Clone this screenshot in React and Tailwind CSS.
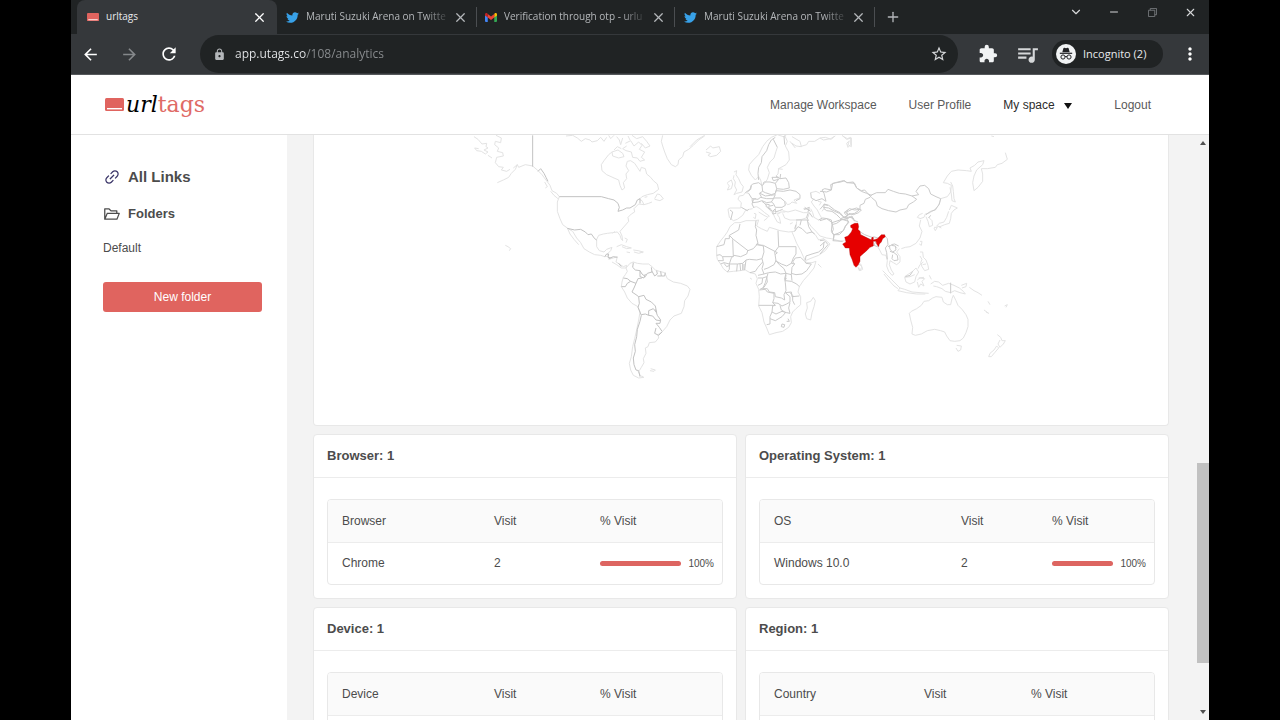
import React, { useState } from "react";
import { ChevronDown, Minus, Plus, X } from "lucide-react";
import { FaTwitter } from "react-icons/fa";
import { AiOutlineFolderOpen, AiOutlineLink } from "react-icons/ai";
import {
  MdArrowBack,
  MdArrowForward,
  MdExtension,
  MdLock,
  MdMoreVert,
  MdQueueMusic,
  MdRefresh,
  MdStarBorder,
} from "react-icons/md";

const TABS = [
  { title: "Maruti Suzuki Arena on Twitte", icon: "twitter" },
  { title: "Verification through otp - urlu", icon: "gmail" },
  { title: "Maruti Suzuki Arena on Twitte", icon: "twitter" },
];

const REPORTS = [
  { title: "Browser: 1", label: "Browser", name: "Chrome", col1: "w-[152px]", col2: "w-[106px]" },
  { title: "Operating System: 1", label: "OS", name: "Windows 10.0", col1: "w-[187px]", col2: "w-[91px]" },
  { title: "Device: 1", label: "Device", name: "Desktop", col1: "w-[152px]", col2: "w-[106px]" },
  { title: "Region: 1", label: "Country", name: "India", col1: "w-[150px]", col2: "w-[107px]" },
];

// Coastlines and country borders, grouped by part of the world
const AMERICAS_COAST = [
  "M42 20L54 28L66 42L80 40L78 50L84 54L72 60L84 66L76 72L64 64L50 62L44 54L56 56M84 76L96 84",
  "M108 16L124 24L122 38L106 34L104 44L116 54L112 64L128 68L130 78L110 82L106 98L116 110L130 112L124 120L140 124L150 118M112 158L130 150L146 142L154 130L166 118L172 104L160 114M172 104L176 112L196 104L218 108",
  "M218 108L234 122L246 134L258 150L270 166L276 182L290 190L298 200M254 156L262 170L256 174M272 184L282 196L294 206",
  "M298 200L292 216L292 244L300 266L308 284L322 294L330 312L342 328L356 344M324 296L338 304L350 324L362 338L372 356L388 366L404 374L422 376L434 380L446 378",
  "M446 378L442 372L452 362L456 352L440 358L432 366L418 362L410 350L410 328L416 316L430 312L442 310L458 308L472 306L480 316L484 328L488 332L486 318L480 304L494 288L506 274L504 262L514 252L524 246L522 236L530 228L536 222L552 224",
  "M446 388L460 384L472 380L468 396L478 402L490 410L500 406L498 414L484 414L470 404L456 396",
  "M470 350L484 344L500 350L514 354L500 356L486 350M520 360L534 362L550 366L536 370L522 366M500 366L510 368M494 324L502 328L498 338M540 366L548 368",
  "M318 18L338 16L352 24L364 34L376 26L390 30L396 36L412 32L422 22L432 34L440 22M446 16L452 26L462 16M470 20L478 30L482 44L488 24",
  "M456 66L474 60L488 70L492 80L476 84L458 78L456 66L446 74L432 92L424 104L426 122L440 134L462 144L476 150L480 166L486 180L494 174L490 158L500 146L498 132L506 122L498 108L502 94L512 92L524 100L532 112L540 124L544 112L556 116L560 132L572 142L580 152L592 162L596 178L580 190L562 194L546 200L538 208L546 212L552 224L566 220L576 216",
  "M496 40L512 32L522 48L536 36L546 46L538 58L554 66L544 82L554 90L540 94L532 84L518 82L514 66L498 62L488 56L500 48M504 18L510 30M516 16L530 26L548 20L560 34L570 48L556 54L544 40M462 60L472 50L484 56",
  "M584 206L592 192L600 194L610 206L600 212L584 208M554 202L562 200",
  "M608 16L604 34L608 48L614 66L622 86L634 104L646 110L654 104L656 90L668 80L672 66L686 58L700 46L716 30L734 18",
  "M136 346L144 350L152 356L148 362",
  "M498 414L502 424L496 434L490 442L486 456L484 470L494 486L502 504L516 520L534 530L540 546L536 570L530 600L524 626L518 650L514 680L508 700L512 720L520 736L536 744L552 742",
  "M498 414L510 400L520 396L532 400L548 402L566 402L576 410L586 420L598 424L614 428L622 446L640 456L662 460L682 468L690 478L684 498L674 512L672 530L664 550L642 558L630 570L620 590L606 606L594 614L596 624L586 636L568 638L564 650L556 654L558 670L550 686L552 698L544 712L538 722",
  "M572 716L586 720L582 724L570 722M534 724L542 738L550 740M458 310L464 304",
];

const AMERICAS_BORDERS = [
  "M218 16L218 110M298 200L424 200L446 206L462 210L474 220L478 232L474 244L488 240L500 234L510 234L526 224L532 210L540 206L540 220",
  "M234 124L242 116L252 130L258 142L264 154M322 295L344 300L362 298L376 306L384 314L394 312L404 326L410 330",
  "M434 380L440 372L446 372L444 382L452 384M446 386L460 380L472 382M476 400L484 410",
  "M520 398L518 412L526 420L540 422L546 432L556 440L562 430L576 426L574 412M576 424L584 438L592 432L590 422M592 438L604 438L602 424M604 438L614 438L616 428M540 422L540 440L552 444L556 432",
  "M490 444L502 446L512 454L528 460L534 446L546 444M484 470L496 470L502 460L512 454M528 460L522 474L516 486L528 494L536 500L552 496L558 508L574 516L586 528L590 548L580 536L566 542L566 556L578 558L588 570L600 572",
  "M536 500L538 520L534 532L544 556L540 574L532 598L530 620L524 644L526 664L520 684L522 704L528 720L536 722L540 740M544 554L556 552L566 556M586 538L592 556L602 570L600 580L588 580L598 592L606 604M588 594L584 610L596 616L606 606",
];

const AFRICA_COAST = [
  "M48 60L62 48L68 54L88 50L92 64L80 76L62 80L54 76L62 70L48 66M0 50L20 30L44 16",
  "M132 126L140 122L138 134L146 146L152 160L160 170L156 186L140 190L132 194L140 180L134 168L136 156L130 146L132 136M112 158L124 150L128 162L124 176L112 180L118 168L112 160",
  "M196 150L184 136L176 120L178 104L190 90L206 74L218 50L230 34L244 22L262 14L280 20L290 14M196 150L206 140L212 150L216 168L224 160L232 148L238 128L232 112L240 96L252 84L258 64L262 52M284 16L292 34L286 48L296 66L298 90L288 104L266 116L264 132L258 138L266 148M264 116L278 118",
  "M306 20L330 34L334 50L318 48L306 40M330 50L350 44L356 34L374 34L390 24L400 30L422 26L436 18M456 16L470 28L484 24L484 50L474 44L478 32",
  "M176 190L166 188L160 196L148 198L144 208L154 218L152 234L120 234L114 238L118 262L130 272L142 268L158 256L166 242L178 238L188 236",
  "M190 232L200 230L210 236L224 248L238 258L234 262L222 256L206 246M232 264L222 272M192 250L198 252L196 266L190 262M226 228L238 238L250 252L254 262L262 276L272 280L268 262L262 254L272 246L286 246",
  "M250 240L260 250L272 248M286 214L292 224L300 222L306 216L320 220L312 210L328 204M278 242L294 246L316 240L340 248L358 248L354 262L336 268L320 270L300 270L284 264L278 250M340 236L360 240M300 282L308 278",
  "M362 188L378 184L390 190M372 206L364 216L372 228L382 240L388 252L396 266L386 270L372 262L368 248L362 236M384 214L394 216L388 226M402 236L396 244",
  "M134 278L120 290L112 306L102 320L92 332L80 350L80 376L82 388L92 402L100 416L112 426L130 424L150 422L166 420L180 428L196 432L202 446L198 460L206 478L208 500L206 528L216 548L222 576L230 594L238 614L258 608L278 604L296 592L304 578L302 560L308 546L318 536L332 524L332 500L324 486L328 470L340 452L356 434L372 414L378 394L366 398L350 398L344 390",
  "M134 278L150 278L168 272L196 272L206 270L200 288L214 296L232 304L238 292L252 296L270 302L296 306L314 304L318 290L320 274",
  "M306 306L312 320L320 340L332 362L340 380L346 392L360 386L386 376L406 362L420 342L408 332L402 326L386 330L376 314L366 306M354 276L364 290L378 304L390 318L410 324L424 326L438 330L452 334L464 332",
  "M370 502L376 512L372 530L366 548L362 570L350 566L346 552L352 534L350 518L362 514L370 502",
  "M504 404L512 402L516 412L508 422L504 412M180 444L186 448",
  "M394 412L384 402M300 34L316 54",
];

const AFRICA_BORDERS = [
  "M206 150L204 130L206 112L214 98L216 80L230 62L236 44L244 30L256 22M262 52L250 28M282 18L284 44M166 188L180 178L184 166L188 162L206 158L216 166M184 166L182 178L172 186",
  "M216 166L218 184L208 190L214 200L204 208L186 206L176 190M218 166L222 156L240 156L256 160L260 176L256 190L244 194L226 188L218 184M258 138L270 146L288 144L296 158L298 174L280 178L260 176M256 160L266 148L250 152L246 142L266 142M270 146L272 132",
  "M256 190L258 182L280 184L300 180L318 184L330 194L330 206L318 212M210 190L226 198L242 196L256 194L250 206L230 206L212 202M186 208L188 218L204 216L216 212L230 218L244 216L252 204L272 204L284 214L286 226L276 232L256 232L250 220L244 216",
  "M216 214L226 222L238 224L236 236L248 244L256 236L256 246L268 242L278 238M226 222L232 232L244 238M188 208L198 206M240 228L250 226M154 232L172 242L176 238M120 240L128 246L122 270M190 210L186 222L192 234M250 242L248 252L258 250",
  "M362 188L364 204L378 212L396 206L408 214L402 190L396 180L404 176L424 180L428 160L452 156L464 152L470 158L490 156L500 174L514 182L524 180L540 198",
  "M402 236L402 222L416 226L434 240L450 248L462 262L474 256L470 246L486 238L500 234L514 240L506 248L490 254L476 250M402 236L410 242L426 244L440 254L452 266L462 262L476 264L486 258L490 270L504 276M386 270L398 264L412 266L424 270L426 284L424 304L432 314L430 328M426 284L440 280L454 270L476 264M430 314L448 314L460 302L466 288L476 278L470 266M354 246L358 232L342 238M358 248L368 262M344 232L362 244M356 272L350 262L354 250",
  "M318 270L334 270L352 270L356 290L366 306L350 310L336 296L324 290L314 304M334 270L330 286M346 390L348 378L366 372L386 366L400 354L402 336M314 296L318 284M366 306L374 312",
  "M150 282L146 300L118 316L118 326L106 326L102 344L80 350M118 316L130 328L174 362L190 356L204 340L198 316L200 300L196 290L198 272M128 328L130 380L98 380L90 374L80 376M204 340L198 344L220 346L262 368L256 374M264 302L266 350L318 350M204 344L220 348L222 366L216 386L220 402M266 350L254 366L258 392L252 404L234 414L222 418",
  "M98 380L100 392L84 392M92 402L102 398L118 402L124 384L132 376L152 380L170 372L174 360M118 402L118 418L112 426M102 400L110 410L120 406M118 402L142 402L140 424M142 402L158 400L158 420M150 402L152 422M162 402L162 420M158 400L168 390L178 388L200 390L216 386M168 390L164 420M180 428L196 424L204 412L218 396",
  "M220 402L216 416L222 432L204 436M222 432L236 428L256 426L272 432L288 430L304 434L306 412L314 402L304 400L290 408L274 402L256 392M258 392L268 404L282 416L288 430M318 350L318 372L310 384L304 400M314 402L308 396L316 384L332 382L344 394L348 400L364 402L350 422L336 432L318 434L304 430",
  "M204 444L218 444L216 460L204 466M218 444L230 440L232 456L222 472L210 478M234 430L226 458L218 476L232 476L238 486L254 488L256 500L274 504L284 510L282 494L288 482L286 458L284 446L288 430M288 434L286 452L304 454L320 462L328 470M284 446L290 446M304 434L306 452",
  "M208 480L226 478L232 486L252 490L252 506L248 518L256 526L206 526M248 518L264 520L276 528L290 522L300 516L300 500L286 488M300 488L308 496L308 512L314 524M286 488L304 486L306 500L328 498M256 526L248 528L246 546L240 560L240 582L230 584M246 546L258 552L276 544L290 548L300 550L296 534L300 518M240 566L256 572L276 560L288 546M276 582L284 584L282 592L274 590L276 582M294 566L298 574L290 574M270 526L274 540L284 546",
];

const ASIA_COAST = [
  "M0 24L16 22L34 28L44 18M68 18L82 26L92 22L92 44L84 52L80 40L86 34M514 18L522 20",
  "M300 266L312 262L316 252L330 248L342 240L356 226L362 208M302 266L292 262L298 254L308 250M326 262L336 272L338 286L328 290L324 274L318 260M302 270L298 288L306 304L300 324L288 340L270 350L256 352L244 356",
  "M362 206L382 200L392 186L394 166L382 160L370 158L382 138L394 124L414 120L440 122L454 124L450 114L464 106L474 96L492 92L488 104L470 120L462 138L458 158L462 182L474 172L488 154L488 132L484 116L502 116L526 112L532 104L546 100L562 88L556 68",
  "M392 156L398 168L400 184L402 206L406 216L396 212L394 192L390 172M388 240L394 226L412 234L402 240L394 250L392 266L388 280L374 284L360 290L350 288L358 280L372 276L380 262L386 244M342 292L352 292L346 302L342 294M356 290L364 294",
  "M300 334L306 334L304 346L298 342M300 366L308 366L310 382L318 390L324 406L326 418L314 422L306 410L302 398L306 388L300 378M310 396L300 404L294 416M318 402L308 404M226 350L232 354M238 356L230 366L240 380L240 396L230 404L220 398L210 392L208 404L214 420L222 432L216 436L206 424L200 408L202 392L198 376L186 374L180 362L172 348",
  "M116 402L124 408L128 418L120 422L116 412M188 422L200 434L214 448L228 462L240 474L254 478L276 486L300 488L326 490M192 432L206 450L222 468L234 476M240 474L234 482L260 488L290 492L316 492",
  "M254 440L266 432L278 424L288 414L296 426L288 440L284 456L270 462L258 456L254 442M254 442L270 440L284 434M292 450L300 444L314 446L306 454L312 468L302 462L296 472L292 456M296 444L312 442M328 436L334 448M332 462L344 454L356 456L368 466L386 460L402 466L418 474L430 484L436 492L420 488L404 482L392 488L376 484L366 476L350 470L340 468M424 466L440 460L438 470L426 474M448 472L462 482L474 488L486 496",
  "M268 550L274 544L290 536L304 526L312 514L326 512L338 504L348 500L366 502L370 516L382 524L392 524L396 506L400 496L408 512L414 526L426 538L438 554L444 568L444 590L438 608L430 624L420 632L404 634L390 632L380 618L374 606L362 602L344 598L322 602L304 612L286 616L276 612L278 592L272 570L268 550",
  "M410 646L424 648L422 660L414 664L408 654M532 614L542 622L546 632L556 632L550 642L540 652L534 642L540 630M530 648L536 654L524 668L514 680L506 680L510 670L522 660L530 648M492 540L506 550L498 546M504 514L510 524M554 528L562 524L558 532",
];

const ASIA_BORDERS = [
  "M0 184L20 186L34 180L32 164L46 158L70 152L82 158L104 160L110 174L124 184L140 190L154 196L150 202L136 208L132 220L120 226L120 238L104 240L88 236L76 246L84 254L104 250L118 240",
  "M152 196L170 188L196 188L204 178L220 184L238 190L256 192L276 198L290 208L280 216L266 224L260 236L240 240L228 246L206 242L186 236L172 228L168 214L154 202",
  "M276 198L296 194L288 184L300 168L314 166L326 176L332 192L348 200L362 206L358 222L346 240L332 244L318 254M332 256L326 264",
  "M10 232L26 234L44 244L58 250L72 262L82 258L72 248L84 240M0 238L12 224L24 226M60 268L76 268L88 260L100 266M36 278L40 298L36 308L42 316L40 332M36 278L54 272L66 268L86 274L76 290L70 302L54 310L42 314M0 272L20 266L34 276M38 332L68 334M104 274L100 264L90 262M0 348L16 334L24 344L12 358L0 372M0 332L14 330",
  "M118 304L134 314L156 322L156 330L138 324L122 314M160 320L174 324M194 318L202 326L204 344L196 354L200 368L202 388M204 350L214 346L226 348L228 360L218 366L210 358L208 346M210 364L222 368L232 376L234 390L222 392L216 386L218 374M168 334L162 346L172 350L178 338M214 344L224 342L236 348",
  "M392 458L392 490M256 440L270 436L278 424",
];

const INDIA =
  "M92 286L104 280L114 280L116 290L114 298L120 304L122 314L138 322L154 330L156 322L160 322L160 330L172 326L184 314L194 314L196 320L188 326L184 336L178 342L176 350L170 342L168 334L160 334L160 348L150 352L140 362L126 374L120 380L120 394L114 406L108 412L102 406L96 388L90 374L88 354L76 354L68 342L78 336L74 322L84 318L94 306L98 296L92 292Z";

function Shapes({ paths, className }) {
  return paths.map((d, i) => (
    <path key={i} d={d} className={className} vectorEffect="non-scaling-stroke" />
  ));
}

function WorldMap() {
  return (
    <svg
      viewBox="0 0 854 290"
      preserveAspectRatio="xMidYMin meet"
      className="block h-[290px] w-full fill-none"
      strokeWidth="1"
      strokeLinejoin="round"
      role="img"
      aria-label="Visits by country"
    >
      <g transform="translate(146 -5) scale(0.33333)">
        <Shapes paths={AMERICAS_COAST} className="stroke-[#e3e3e3]" />
        <Shapes paths={AMERICAS_BORDERS} className="stroke-[#c2c2c2]" />
      </g>
      <g transform="translate(376 -5) scale(0.33333)">
        <Shapes paths={AFRICA_COAST} className="stroke-[#e3e3e3]" />
        <Shapes paths={AFRICA_BORDERS} className="stroke-[#cbcbcb]" />
      </g>
      <g transform="translate(506 -5) scale(0.33333)">
        <Shapes paths={ASIA_COAST} className="stroke-[#e3e3e3]" />
        <Shapes paths={ASIA_BORDERS} className="stroke-[#cbcbcb]" />
        <path d={INDIA} className="fill-[#e60000] stroke-[#a80000]" />
      </g>
    </svg>
  );
}

function CardIcon({ className }) {
  return (
    <svg viewBox="0 0 19 13" className={className} aria-hidden="true">
      <rect width="19" height="13" rx="1.5" fill="#e0645f" />
      <rect x="2" y="10" width="15" height="1.4" fill="#fff" />
    </svg>
  );
}

function GmailIcon() {
  return (
    <svg viewBox="0 0 24 18" className="w-3 shrink-0" aria-hidden="true">
      <path d="M0 2.5V16a2 2 0 0 0 2 2h3.500V7z" fill="#4285f4" />
      <path d="M24 2.500V16a2 2 0 0 1-2 2h-3.500V7z" fill="#34a853" />
      <path d="M18.500 2.200V9L24 5V2.500c0-2.300-2.600-3.300-4.300-2z" fill="#fbbc04" />
      <path d="M5.500 9V2.200L12 7l6.500-4.800V9L12 14z" fill="#ea4335" />
      <path d="M0 2.500V5l5.500 4V2.200L4.300.500C2.600-.800 0 .200 0 2.500z" fill="#c5221f" />
    </svg>
  );
}

function IncognitoIcon() {
  return (
    <svg viewBox="0 0 20 20" className="size-5" aria-hidden="true">
      <circle cx="10" cy="10" r="10" fill="#f1f3f4" />
      <path d="M6.300 8.200L7.400 4.200Q7.700 3.500 8.500 3.800L10 4.200L11.500 3.800Q12.300 3.500 12.600 4.200L13.700 8.200Z" fill="#202124" />
      <path d="M3.800 9.300H16.200" stroke="#202124" strokeWidth="1.2" />
      <g fill="none" stroke="#202124" strokeWidth="1">
        <circle cx="7" cy="13" r="2.100" />
        <circle cx="13" cy="13" r="2.100" />
        <path d="M9.100 12.700Q10 12 10.900 12.700" />
      </g>
    </svg>
  );
}

function RestoreIcon() {
  return (
    <svg viewBox="0 0 10 10" className="size-[9px] fill-none stroke-[#777b7e]" aria-hidden="true">
      <path d="M.5 2.500H7.500V9.500H.5ZM2.500 2.500V.5H9.500V7.500H7.500" />
    </svg>
  );
}

function BrowserChrome() {
  const [url, setUrl] = useState("app.utags.co/108/analytics");

  return (
    <div className="shrink-0 bg-[#202324] font-['Open_Sans','Noto_Sans',sans-serif] text-[11px] text-[#b4b7ba]">
      <div className="flex h-[34px] pl-[6px] text-[10px]">
        <div className="flex w-[200px] items-center gap-[7px] rounded-t-lg bg-[#35383b] px-[10px] text-[#e8eaed]">
          <CardIcon className="w-3" />
          <span className="flex-1">urltags</span>
          <button aria-label="Close tab" className="text-white">
            <X size={15} strokeWidth={2} />
          </button>
        </div>
        {TABS.map((tab, i) => (
          <div key={i} className="flex w-[199px] items-center">
            <div className="flex h-5 flex-1 items-center gap-[7px] border-r border-[#4b4e51] px-2 pl-[9px]">
              {tab.icon === "twitter" ? (
                <FaTwitter className="size-[13px] shrink-0 text-[#38a1e8]" />
              ) : (
                <GmailIcon />
              )}
              <span className="whitespace-nowrap [mask-image:linear-gradient(90deg,#000_85%,#0003)]">
                {tab.title}
              </span>
              <button aria-label="Close tab" className="ml-auto">
                <X size={15} strokeWidth={2} />
              </button>
            </div>
          </div>
        ))}
        <button aria-label="New tab" className="ml-[11px]">
          <Plus size={16} strokeWidth={2} />
        </button>
        <div className="ml-auto flex h-6 items-center text-[#d5d7d9]">
          <button aria-label="Search tabs" className="flex w-[38px] justify-center">
            <ChevronDown size={14} />
          </button>
          <button aria-label="Minimize" className="flex w-[38px] justify-center">
            <Minus size={12} />
          </button>
          <button aria-label="Restore" className="flex w-[38px] justify-center">
            <RestoreIcon />
          </button>
          <button aria-label="Close" className="flex w-[38px] justify-center">
            <X size={13} />
          </button>
        </div>
      </div>

      <div className="flex h-[41px] items-center border-b border-[#55585b] bg-[#35383b] pl-[10px] text-white">
        <button aria-label="Back" className="mr-5">
          <MdArrowBack size={19} />
        </button>
        <button aria-label="Forward" className="mr-5 text-[#85888b]">
          <MdArrowForward size={19} />
        </button>
        <button aria-label="Reload">
          <MdRefresh size={20} />
        </button>
        <div className="ml-[21px] flex h-[38px] flex-1 items-center gap-[9px] rounded-full bg-[#202324] pr-[10px] pl-[13px]">
          <MdLock size={13} className="text-[#b4b7ba]" />
          <input
            aria-label="Address"
            value={url}
            onChange={(e) => setUrl(e.target.value)}
            className="min-w-0 flex-1 bg-[linear-gradient(90deg,#e8eaed_71px,#8b8e91_71px)] bg-clip-text text-xs text-transparent outline-none"
          />
          <button aria-label="Bookmark this page" className="text-[#d5d7d9]">
            <MdStarBorder size={18} />
          </button>
        </div>
        <button aria-label="Extensions" className="ml-5 text-[#f1f3f4]">
          <MdExtension size={20} />
        </button>
        <button aria-label="Media control" className="ml-[17px] text-[#d5d7d9]">
          <MdQueueMusic size={25} />
        </button>
        <button className="ml-3 flex h-[28px] w-[111px] items-center gap-[7px] rounded-full bg-[#202324] pl-1 text-[#e8eaed]">
          <IncognitoIcon />
          Incognito (2)
        </button>
        <button aria-label="Menu" className="mr-[9px] ml-[17px]">
          <MdMoreVert size={20} />
        </button>
      </div>
    </div>
  );
}

function Header() {
  return (
    <header className="flex h-[60px] shrink-0 items-center border-b border-[#e2e2e2] bg-white pr-[58px] pl-[34px] text-[#5a5a5a]">
      <a href="#home" className="flex items-center font-['DejaVu_Serif',serif] text-[22px] leading-7 text-[#df6b66]">
        <CardIcon className="mr-[2px] w-[19px]" />
        <span className="text-black italic">url</span>tags
      </a>
      <nav className="ml-auto flex items-center">
        <a href="#workspace" className="mr-8">Manage Workspace</a>
        <a href="#profile" className="mr-8">User Profile</a>
        <div className="relative mr-[42px]">
          <select aria-label="Space" className="block w-[69px] appearance-none text-[#2c2c2c] outline-none">
            <option>My space</option>
          </select>
          <svg viewBox="0 0 8 6" className="pointer-events-none absolute top-[6px] right-0 w-2" aria-hidden="true">
            <path d="M0 0H8L4 6Z" fill="#111" />
          </svg>
        </div>
        <a href="#logout">Logout</a>
      </nav>
    </header>
  );
}

function Sidebar() {
  return (
    <aside className="w-[216px] shrink-0 bg-white pt-[30px] pr-[25px] pl-8">
      <a href="#links" className="flex h-6 items-center gap-[7px] text-[15px] font-bold">
        <AiOutlineLink size={18} className="text-[#3a3568]" />
        All Links
      </a>
      <h2 className="mt-[13px] flex h-6 items-center gap-[7px] text-[13px] font-bold">
        <AiOutlineFolderOpen size={18} />
        Folders
      </h2>
      <a href="#default" className="mt-3 block leading-5">Default</a>
      <button className="mt-6 h-[30px] w-full rounded-[3px] bg-[#e0645f] text-white">
        New folder
      </button>
    </aside>
  );
}

function ReportCard({ report }) {
  return (
    <section className="rounded border border-[#e8e8e8] bg-white">
      <h3 className="border-b border-[#ececec] px-[13px] text-[13px] leading-[42px] font-bold">
        {report.title}
      </h3>
      <div className="px-[13px] pt-[21px] pb-[13px]">
        <div className="overflow-hidden rounded border border-[#e8e8e8]">
          <table className="w-full table-fixed text-left">
            <thead className="bg-[#fafafa]">
              <tr className="h-[42px] border-b border-[#ececec]">
                <th className={`${report.col1} pl-[14px] font-normal`}>{report.label}</th>
                <th className={`${report.col2} pl-[14px] font-normal`}>Visit</th>
                <th className="pl-[14px] font-normal">% Visit</th>
              </tr>
            </thead>
            <tbody>
              <tr className="h-[42px]">
                <td className="pl-[14px]">{report.name}</td>
                <td className="pl-[14px]">2</td>
                <td className="pr-2 pl-[14px]">
                  <div className="flex items-center gap-[7px] text-[10px]">
                    <div className="h-[5px] flex-1 rounded-full bg-[#dd6561]" />
                    100%
                  </div>
                </td>
              </tr>
            </tbody>
          </table>
        </div>
      </div>
    </section>
  );
}

function Scrollbar() {
  return (
    <div className="flex w-3 shrink-0 flex-col items-center bg-[#f3f3f3]">
      <svg viewBox="0 0 6 4" className="my-[6px] w-[6px]" aria-hidden="true">
        <path d="M0 4L3 0L6 4Z" fill="#505050" />
      </svg>
      <div className="grow-[312]" />
      <div className="h-[200px] w-full bg-[#c1c1c1]" />
      <div className="grow-[41]" />
      <svg viewBox="0 0 6 4" className="my-[6px] w-[6px]" aria-hidden="true">
        <path d="M0 0L3 4L6 0Z" fill="#505050" />
      </svg>
    </div>
  );
}

export default function App() {
  return (
    <div className="h-screen bg-black px-[71px]">
      <div className="flex h-full flex-col font-['Liberation_Sans',Arial,sans-serif] text-xs text-[#4c4c4c]">
        <BrowserChrome />
        <Header />
        <div className="flex min-h-0 flex-1">
          <Sidebar />
          <main className="min-w-0 flex-1 overflow-hidden bg-[#f3f3f3] pr-7 pl-[26px]">
            <section className="rounded-b border border-t-0 border-[#e8e8e8] bg-white">
              <WorldMap />
            </section>
            <div className="mt-2 grid grid-cols-2 gap-2">
              {REPORTS.map((report) => (
                <ReportCard key={report.title} report={report} />
              ))}
            </div>
          </main>
          <Scrollbar />
        </div>
      </div>
    </div>
  );
}
